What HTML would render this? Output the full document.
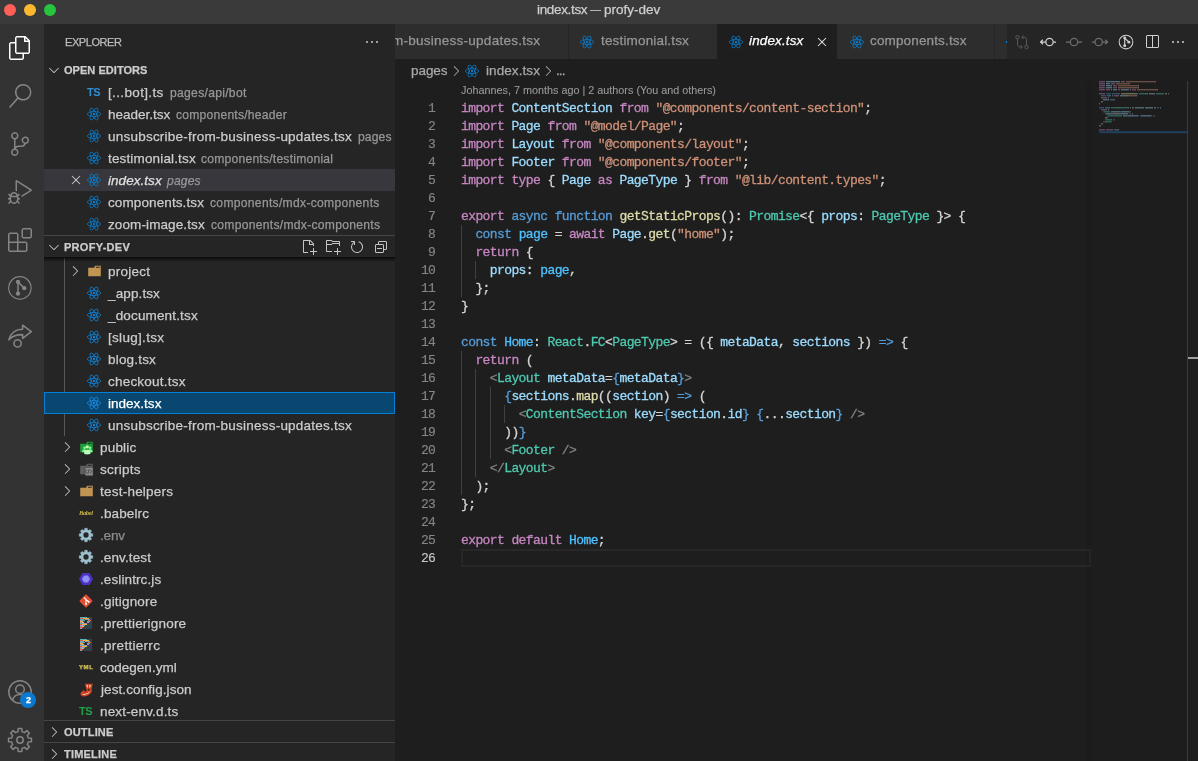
<!DOCTYPE html>
<html>
<head>
<meta charset="utf-8">
<title>index.tsx — profy-dev</title>
<style>
*{box-sizing:border-box;margin:0;padding:0}
html,body{width:1198px;height:761px;overflow:hidden;background:#1e1e1e}
body{font-family:"Liberation Sans",sans-serif;font-size:13px;color:#cccccc;position:relative}
.p{position:absolute}
.tx{position:absolute;white-space:pre;height:22px;will-change:transform;-webkit-text-stroke:0.25px}
.ic{position:absolute;overflow:visible}
#code{position:absolute;left:0;top:0;font-family:"Liberation Mono",monospace;font-size:13px;letter-spacing:-0.6px;color:#d4d4d4}
.ln{-webkit-text-stroke:0.15px;will-change:transform;position:absolute;left:395px;width:40.3px;text-align:right;color:#858585;height:18px;line-height:18px;white-space:pre}
.cl{-webkit-text-stroke:0.3px;will-change:transform;position:absolute;left:461px;height:18px;line-height:18px;white-space:pre}
.k{color:#c586c0}.b{color:#569cd6}.v{color:#9cdcfe}.s{color:#ce9178}.f{color:#dcdcaa}.t{color:#4ec9b0}.c{color:#4fc1ff}.g{color:#808080}
.gd{position:absolute;width:1px;background:#404040}
</style>
</head>
<body>
<div class="p" style="left:0px;top:0px;width:1198px;height:24px;background:#3a3a3a;"></div><div class="p" style="left:0px;top:24px;width:44px;height:737px;background:#333333;"></div><div class="p" style="left:44px;top:24px;width:351px;height:737px;background:#252526;"></div><div class="p" style="left:395px;top:24px;width:803px;height:35px;background:#252526;"></div><div class="p" style="left:395px;top:59px;width:803px;height:702px;background:#1e1e1e;"></div><div class="p" style="left:4px;top:4px;width:12px;height:12px;border-radius:50%;background:#fe5f57"></div><div class="p" style="left:24px;top:4px;width:12px;height:12px;border-radius:50%;background:#fdb82d"></div><div class="p" style="left:44px;top:4px;width:12px;height:12px;border-radius:50%;background:#27c43e"></div><div class="p" style="left:590.2px;top:9.5px;width:10.8px;height:1.2px;background:#b4b4b4;"></div><svg class="ic" style="left:8px;top:36px" width="24" height="24" viewBox="0 0 24 24" fill="#ffffff" ><path d="M17.5 0h-9L7 1.5V6H2.5L1 7.5v15.07L2.5 24h12.07L16 22.57V18h4.7l1.3-1.43V4.5L17.5 0zm0 2.12l2.38 2.38H17.5V2.12zm-3 20.38h-12v-15H7v9.07L8.5 18h6v4.5zm6-6h-12v-15H16V6h4.5v10.5z"/></svg><svg class="ic" style="left:8px;top:84px" width="24" height="24" viewBox="0 0 24 24" fill="#858585" ><path d="M15.25 0a8.25 8.25 0 0 0-6.18 13.72L1 22.88l1.12 1.12 8.05-9.12A8.251 8.251 0 1 0 15.25.01V0zm0 15a6.75 6.75 0 1 1 0-13.5 6.75 6.75 0 0 1 0 13.5z"/></svg><svg class="ic" style="left:8px;top:132px" width="24" height="24" viewBox="0 0 24 24" fill="#858585" ><path d="M21.007 8.222A3.738 3.738 0 0 0 15.045 5.2a3.737 3.737 0 0 0 1.156 6.583 2.988 2.988 0 0 1-2.668 1.67h-2.99a4.456 4.456 0 0 0-2.989 1.165V7.4a3.737 3.737 0 1 0-1.494 0v9.117a3.776 3.776 0 1 0 1.816.099 2.99 2.99 0 0 1 2.668-1.667h2.99a4.484 4.484 0 0 0 4.223-3.039 3.736 3.736 0 0 0 3.25-3.687zM4.565 3.738a2.242 2.242 0 1 1 4.484 0 2.242 2.242 0 0 1-4.484 0zm4.484 16.441a2.242 2.242 0 1 1-4.484 0 2.242 2.242 0 0 1 4.484 0zm8.221-9.715a2.242 2.242 0 1 1 0-4.485 2.242 2.242 0 0 1 0 4.485z"/></svg><svg class="ic" style="left:8px;top:180px" width="24" height="24" viewBox="0 0 24 24" fill="#858585" ><path d="M10.94 13.5l-1.32 1.32a3.73 3.73 0 0 0-7.24 0L1.06 13.5 0 14.56l1.72 1.72-.22.22V18H0v1.5h1.5v.08c.077.489.214.966.41 1.42L0 22.94 1.06 24l1.65-1.65A4.308 4.308 0 0 0 6 24a4.31 4.31 0 0 0 3.29-1.65L10.94 24 12 22.94 10.09 21c.198-.464.336-.951.41-1.45v-.1H12V18h-1.5v-1.5l-.22-.22L12 14.56l-1.06-1.06zM6 13.5a2.25 2.25 0 0 1 2.25 2.25h-4.5A2.25 2.25 0 0 1 6 13.5zm3 6a3.33 3.33 0 0 1-3 3 3.33 3.33 0 0 1-3-3v-2.25h6v2.25zm14.76-9.9v1.26L13.5 17.37V15.6l8.5-5.37L9 2v9.46a5.07 5.07 0 0 0-1.5-.72V.63L8.64 0l15.12 9.6z"/></svg><svg class="ic" style="left:8px;top:228px" width="24" height="24" viewBox="0 0 24 24" fill="#858585" ><path d="M13.5 1.5L15 0h7.5L24 1.5V9l-1.5 1.5H15L13.5 9V1.5zm1.5 0V9h7.5V1.5H15zM0 15V6l1.5-1.5H9L10.5 6v7.5H18l1.5 1.5v7.5L18 24H1.5L0 22.5V15zm9-1.5V6H1.5v7.5H9zM9 15H1.5v7.5H9V15zm1.5 7.5H18V15h-7.5v7.5z"/></svg><svg class="ic" style="left:8px;top:276px" width="24" height="24" viewBox="0 0 24 24" fill="none" stroke="#858585" stroke-width="1.150"><circle cx="11.900" cy="11.900" r="11.200"/><path d="M10 5.900V17.700M10 5.900L16.300 12.200" stroke-width="1.500"/><circle cx="10" cy="5.900" r="2.150" fill="#858585" stroke="none"/><circle cx="10" cy="17.700" r="2.150" fill="#858585" stroke="none"/><circle cx="16.300" cy="12.200" r="2.150" fill="#858585" stroke="none"/></svg><svg class="ic" style="left:8px;top:324px" width="24" height="24" viewBox="0 0 24 24" fill="none" stroke="#858585" stroke-width="1.600" stroke-linejoin="round"><path d="M0.900 15.800C2.500 9.500 7.500 5.200 14.600 5.200V1.200L23.300 7.700L14.600 14.400V10.600C9.500 10.600 4.500 11.200 0.900 15.800Z"/><circle cx="9.600" cy="19.400" r="3.600"/></svg><svg class="ic" style="left:8px;top:680px" width="24" height="24" viewBox="0 0 24 24" fill="none" stroke="#858585" stroke-width="1.5"><circle cx="12" cy="12" r="11.2"/><circle cx="12" cy="9.2" r="4.3"/><path d="M4.6 20.2C5.6 16.4 8.4 14.6 12 14.6S18.4 16.4 19.4 20.2"/></svg><div class="p" style="left:20px;top:692px;width:16px;height:16px;border-radius:50%;background:#0a7ad1"></div><svg class="ic" style="left:8px;top:728px" width="24" height="24" viewBox="0 0 24 24" fill="none" stroke="#858585" stroke-width="1.5" stroke-linejoin="round"><path d="M9.99 3.64 L10.19 0.54 L13.81 0.54 L14.01 3.64 L16.49 4.67 L18.82 2.62 L21.38 5.18 L19.33 7.51 L20.36 9.99 L23.46 10.19 L23.46 13.81 L20.36 14.01 L19.33 16.49 L21.38 18.82 L18.82 21.38 L16.49 19.33 L14.01 20.36 L13.81 23.46 L10.19 23.46 L9.99 20.36 L7.51 19.33 L5.18 21.38 L2.62 18.82 L4.67 16.49 L3.64 14.01 L0.54 13.81 L0.54 10.19 L3.64 9.99 L4.67 7.51 L2.62 5.18 L5.18 2.62 L7.51 4.67Z"/><circle cx="12" cy="12" r="3.2"/></svg><svg class="ic" style="left:364px;top:34px" width="16" height="16" viewBox="0 0 16 16" fill="#c5c5c5" ><path d="M4 8a1 1 0 1 1-2 0 1 1 0 0 1 2 0zm5 0a1 1 0 1 1-2 0 1 1 0 0 1 2 0zm5 0a1 1 0 1 1-2 0 1 1 0 0 1 2 0z"/></svg><svg class="ic" style="left:46px;top:62px" width="16" height="16" viewBox="0 0 16 16" fill="#c5c5c5" ><path d="M7.976 10.072l4.357-4.357.62.618L8.284 11h-.618L3 6.333l.619-.618 4.357 4.357z"/></svg><svg class="ic" style="left:86.1px;top:106px" width="16" height="16" viewBox="0 0 16 16" fill="none" stroke="#0a7ccc" stroke-width="0.75"><ellipse cx="8" cy="8" rx="6.65" ry="2.5" transform="rotate(0 8 8)"/><ellipse cx="8" cy="8" rx="6.65" ry="2.5" transform="rotate(60 8 8)"/><ellipse cx="8" cy="8" rx="6.65" ry="2.5" transform="rotate(120 8 8)"/><circle cx="8" cy="8" r="1.2" fill="#0a7ccc" stroke="none"/></svg><svg class="ic" style="left:86.1px;top:128px" width="16" height="16" viewBox="0 0 16 16" fill="none" stroke="#0a7ccc" stroke-width="0.75"><ellipse cx="8" cy="8" rx="6.65" ry="2.5" transform="rotate(0 8 8)"/><ellipse cx="8" cy="8" rx="6.65" ry="2.5" transform="rotate(60 8 8)"/><ellipse cx="8" cy="8" rx="6.65" ry="2.5" transform="rotate(120 8 8)"/><circle cx="8" cy="8" r="1.2" fill="#0a7ccc" stroke="none"/></svg><svg class="ic" style="left:86.1px;top:150px" width="16" height="16" viewBox="0 0 16 16" fill="none" stroke="#0a7ccc" stroke-width="0.75"><ellipse cx="8" cy="8" rx="6.65" ry="2.5" transform="rotate(0 8 8)"/><ellipse cx="8" cy="8" rx="6.65" ry="2.5" transform="rotate(60 8 8)"/><ellipse cx="8" cy="8" rx="6.65" ry="2.5" transform="rotate(120 8 8)"/><circle cx="8" cy="8" r="1.2" fill="#0a7ccc" stroke="none"/></svg><div class="p" style="left:44px;top:169px;width:351px;height:22px;background:#37373d;"></div><svg class="ic" style="left:68px;top:172px" width="16" height="16" viewBox="0 0 16 16" fill="#c5c5c5" ><path d="M8 8.707l3.646 3.647.708-.707L8.707 8l3.647-3.646-.707-.708L8 7.293 4.354 3.646l-.707.708L7.293 8l-3.646 3.646.707.708L8 8.707z"/></svg><svg class="ic" style="left:86.1px;top:172px" width="16" height="16" viewBox="0 0 16 16" fill="none" stroke="#0a7ccc" stroke-width="0.75"><ellipse cx="8" cy="8" rx="6.65" ry="2.5" transform="rotate(0 8 8)"/><ellipse cx="8" cy="8" rx="6.65" ry="2.5" transform="rotate(60 8 8)"/><ellipse cx="8" cy="8" rx="6.65" ry="2.5" transform="rotate(120 8 8)"/><circle cx="8" cy="8" r="1.2" fill="#0a7ccc" stroke="none"/></svg><svg class="ic" style="left:86.1px;top:194px" width="16" height="16" viewBox="0 0 16 16" fill="none" stroke="#0a7ccc" stroke-width="0.75"><ellipse cx="8" cy="8" rx="6.65" ry="2.5" transform="rotate(0 8 8)"/><ellipse cx="8" cy="8" rx="6.65" ry="2.5" transform="rotate(60 8 8)"/><ellipse cx="8" cy="8" rx="6.65" ry="2.5" transform="rotate(120 8 8)"/><circle cx="8" cy="8" r="1.2" fill="#0a7ccc" stroke="none"/></svg><svg class="ic" style="left:86.1px;top:216px" width="16" height="16" viewBox="0 0 16 16" fill="none" stroke="#0a7ccc" stroke-width="0.75"><ellipse cx="8" cy="8" rx="6.65" ry="2.5" transform="rotate(0 8 8)"/><ellipse cx="8" cy="8" rx="6.65" ry="2.5" transform="rotate(60 8 8)"/><ellipse cx="8" cy="8" rx="6.65" ry="2.5" transform="rotate(120 8 8)"/><circle cx="8" cy="8" r="1.2" fill="#0a7ccc" stroke="none"/></svg><div class="p" style="left:44px;top:235px;width:351px;height:1px;background:#454545;"></div><svg class="ic" style="left:46px;top:239px" width="16" height="16" viewBox="0 0 16 16" fill="#c5c5c5" ><path d="M7.976 10.072l4.357-4.357.62.618L8.284 11h-.618L3 6.333l.619-.618 4.357 4.357z"/></svg><svg class="ic" style="left:301px;top:239px" width="16" height="16" viewBox="0 0 16 16" fill="#c5c5c5" ><path d="M9.5 1.1l3.4 3.5.1.4v2h-1V6H8V2H3v11h4v1H2.5l-.5-.5v-12l.5-.5h6.7l.3.1zM9 2v3h2.9L9 2zm4 14h-1v-3H9v-1h3V9h1v3h3v1h-3v3z"/></svg><svg class="ic" style="left:325px;top:239px" width="16" height="16" viewBox="0 0 16 16" fill="#c5c5c5" ><path d="M14.5 2H7.71l-.85-.85L6.51 1h-5l-.5.5v11l.5.5H7v-1H1.99V6h4.49l.35-.15.86-.86H14v1.5l-.001.51h1.011V2.5L14.5 2zm-.51 2h-6.5l-.35.15-.86.86H2v-3h4.29l.85.85.36.15H14l-.01.99zM13 16h-1v-3H9v-1h3V9h1v3h3v1h-3v3z"/></svg><svg class="ic" style="left:349px;top:239px" width="16" height="16" viewBox="0 0 16 16" fill="#c5c5c5" ><path d="M4.681 3H2V2h3.5l.5.5V6H5V4a5 5 0 1 0 4.53-.761l.302-.954A6 6 0 1 1 4.681 3z"/></svg><svg class="ic" style="left:373px;top:239px" width="16" height="16" viewBox="0 0 16 16" fill="#c5c5c5" ><path d="M9 9H4v1h5V9z M5 3l1-1h7l1 1v7l-1 1h-2v2l-1 1H3l-1-1V6l1-1h2V3zm1 2h4l1 1v4h2V3H6v2zm4 1H3v7h7V6z"/></svg><div class="p" style="left:64px;top:258px;width:1px;height:178px;background:#585858;"></div><div class="p" style="left:44px;top:257px;width:351px;height:5px;background:linear-gradient(#000000b0,#00000000)"></div><svg class="ic" style="left:66.9px;top:263px" width="16" height="16" viewBox="0 0 16 16" fill="#c5c5c5" ><path d="M10.072 8.024L5.715 3.667l.618-.62L11 7.716v.618L6.333 13l-.618-.619 4.357-4.357z"/></svg><svg class="ic" style="left:85.89999999999999px;top:263px" width="16" height="16" viewBox="0 0 32 32"><path d="M27.5 5.5H18.2L16.1 9.7H4.4V26.5H29.6V5.5Zm0 4.2H19.3l1.1-2.1h7.1Z" fill="#c09553"/></svg><svg class="ic" style="left:86.1px;top:285px" width="16" height="16" viewBox="0 0 16 16" fill="none" stroke="#1283d6" stroke-width="0.75"><ellipse cx="8" cy="8" rx="6.65" ry="2.5" transform="rotate(0 8 8)"/><ellipse cx="8" cy="8" rx="6.65" ry="2.5" transform="rotate(60 8 8)"/><ellipse cx="8" cy="8" rx="6.65" ry="2.5" transform="rotate(120 8 8)"/><circle cx="8" cy="8" r="1.2" fill="#1283d6" stroke="none"/></svg><svg class="ic" style="left:86.1px;top:307px" width="16" height="16" viewBox="0 0 16 16" fill="none" stroke="#1283d6" stroke-width="0.75"><ellipse cx="8" cy="8" rx="6.65" ry="2.5" transform="rotate(0 8 8)"/><ellipse cx="8" cy="8" rx="6.65" ry="2.5" transform="rotate(60 8 8)"/><ellipse cx="8" cy="8" rx="6.65" ry="2.5" transform="rotate(120 8 8)"/><circle cx="8" cy="8" r="1.2" fill="#1283d6" stroke="none"/></svg><svg class="ic" style="left:86.1px;top:329px" width="16" height="16" viewBox="0 0 16 16" fill="none" stroke="#1283d6" stroke-width="0.75"><ellipse cx="8" cy="8" rx="6.65" ry="2.5" transform="rotate(0 8 8)"/><ellipse cx="8" cy="8" rx="6.65" ry="2.5" transform="rotate(60 8 8)"/><ellipse cx="8" cy="8" rx="6.65" ry="2.5" transform="rotate(120 8 8)"/><circle cx="8" cy="8" r="1.2" fill="#1283d6" stroke="none"/></svg><svg class="ic" style="left:86.1px;top:351px" width="16" height="16" viewBox="0 0 16 16" fill="none" stroke="#1283d6" stroke-width="0.75"><ellipse cx="8" cy="8" rx="6.65" ry="2.5" transform="rotate(0 8 8)"/><ellipse cx="8" cy="8" rx="6.65" ry="2.5" transform="rotate(60 8 8)"/><ellipse cx="8" cy="8" rx="6.65" ry="2.5" transform="rotate(120 8 8)"/><circle cx="8" cy="8" r="1.2" fill="#1283d6" stroke="none"/></svg><svg class="ic" style="left:86.1px;top:373px" width="16" height="16" viewBox="0 0 16 16" fill="none" stroke="#1283d6" stroke-width="0.75"><ellipse cx="8" cy="8" rx="6.65" ry="2.5" transform="rotate(0 8 8)"/><ellipse cx="8" cy="8" rx="6.65" ry="2.5" transform="rotate(60 8 8)"/><ellipse cx="8" cy="8" rx="6.65" ry="2.5" transform="rotate(120 8 8)"/><circle cx="8" cy="8" r="1.2" fill="#1283d6" stroke="none"/></svg><div class="p" style="left:44px;top:392px;width:351px;height:22px;background:#094771;border:1px solid #007fd4"></div><svg class="ic" style="left:86.1px;top:395px" width="16" height="16" viewBox="0 0 16 16" fill="none" stroke="#1a8be0" stroke-width="0.75"><ellipse cx="8" cy="8" rx="6.65" ry="2.5" transform="rotate(0 8 8)"/><ellipse cx="8" cy="8" rx="6.65" ry="2.5" transform="rotate(60 8 8)"/><ellipse cx="8" cy="8" rx="6.65" ry="2.5" transform="rotate(120 8 8)"/><circle cx="8" cy="8" r="1.2" fill="#1a8be0" stroke="none"/></svg><svg class="ic" style="left:86.1px;top:417px" width="16" height="16" viewBox="0 0 16 16" fill="none" stroke="#1283d6" stroke-width="0.75"><ellipse cx="8" cy="8" rx="6.65" ry="2.5" transform="rotate(0 8 8)"/><ellipse cx="8" cy="8" rx="6.65" ry="2.5" transform="rotate(60 8 8)"/><ellipse cx="8" cy="8" rx="6.65" ry="2.5" transform="rotate(120 8 8)"/><circle cx="8" cy="8" r="1.2" fill="#1283d6" stroke="none"/></svg><svg class="ic" style="left:58.900000000000006px;top:439px" width="16" height="16" viewBox="0 0 16 16" fill="#c5c5c5" ><path d="M10.072 8.024L5.715 3.667l.618-.62L11 7.716v.618L6.333 13l-.618-.619 4.357-4.357z"/></svg><svg class="ic" style="left:78.2px;top:439px" width="16" height="16" viewBox="0 0 32 32"><path d="M27.5 5.5H18.2L16.1 9.7H4.4V26.5H29.6V5.5Zm0 4.2H19.3l1.1-2.1h7.1Z" fill="#1f9b3a"/><g transform="translate(1.6 1.2)"><g fill="#8ef58f"><circle cx="11.500" cy="16.500" r="2.600"/><circle cx="22.500" cy="16.500" r="2.600"/><path d="M6.500 25.500c0-4 2.200-6 5-6s5 2 5 6zM17.500 25.500c0-4 2.200-6 5-6s5 2 5 6z"/></g><g fill="#b9ffba"><circle cx="17" cy="14.500" r="3.200"/><path d="M10.500 28.500c0-5.500 3-8 6.500-8s6.500 2.500 6.500 8c-2 1.600-11 1.600-13 0z"/></g></g></svg><svg class="ic" style="left:58.900000000000006px;top:461px" width="16" height="16" viewBox="0 0 16 16" fill="#c5c5c5" ><path d="M10.072 8.024L5.715 3.667l.618-.62L11 7.716v.618L6.333 13l-.618-.619 4.357-4.357z"/></svg><svg class="ic" style="left:78.2px;top:461px" width="16" height="16" viewBox="0 0 32 32"><path d="M27.5 5.5H18.2L16.1 9.7H4.4V26.5H29.6V5.5Zm0 4.2H19.3l1.1-2.1h7.1Z" fill="#5f5f5f"/><path d="M14 12.500h13.500c1.500 0 2.500 1 2.500 2.500v14.500H17c-1.600 0-3-1.200-3-3z" fill="#8a8a8a" stroke="#3c3c3c" stroke-width="1.200"/><path d="M18 17.500l-3 3.500 3 3.500M24 17.500l3 3.500-3 3.500M22.500 16l-3 10" stroke="#3c3c3c" stroke-width="1.600" fill="none"/></svg><svg class="ic" style="left:58.900000000000006px;top:483px" width="16" height="16" viewBox="0 0 16 16" fill="#c5c5c5" ><path d="M10.072 8.024L5.715 3.667l.618-.62L11 7.716v.618L6.333 13l-.618-.619 4.357-4.357z"/></svg><svg class="ic" style="left:78.2px;top:483px" width="16" height="16" viewBox="0 0 32 32"><path d="M27.5 5.5H18.2L16.1 9.7H4.4V26.5H29.6V5.5Zm0 4.2H19.3l1.1-2.1h7.1Z" fill="#c09553"/></svg><svg class="ic" style="left:78.4px;top:527px" width="16" height="16" viewBox="0 0 16 16"><path d="M6.75 2.95 L6.78 1.31 L9.22 1.31 L9.25 2.95 L10.68 3.55 L11.87 2.41 L13.59 4.13 L12.45 5.32 L13.05 6.75 L14.69 6.78 L14.69 9.22 L13.05 9.25 L12.45 10.68 L13.59 11.87 L11.87 13.59 L10.68 12.45 L9.25 13.05 L9.22 14.69 L6.78 14.69 L6.75 13.05 L5.32 12.45 L4.13 13.59 L2.41 11.87 L3.55 10.68 L2.95 9.25 L1.31 9.22 L1.31 6.78 L2.95 6.75 L3.55 5.32 L2.41 4.13 L4.13 2.41 L5.32 3.55Z" fill="#9dc0cf" stroke="#9dc0cf" stroke-width="0.600" stroke-linejoin="round"/><circle cx="8" cy="8" r="2.650" fill="#252526"/></svg><svg class="ic" style="left:78.4px;top:549px" width="16" height="16" viewBox="0 0 16 16"><path d="M6.75 2.95 L6.78 1.31 L9.22 1.31 L9.25 2.95 L10.68 3.55 L11.87 2.41 L13.59 4.13 L12.45 5.32 L13.05 6.75 L14.69 6.78 L14.69 9.22 L13.05 9.25 L12.45 10.68 L13.59 11.87 L11.87 13.59 L10.68 12.45 L9.25 13.05 L9.22 14.69 L6.78 14.69 L6.75 13.05 L5.32 12.45 L4.13 13.59 L2.41 11.87 L3.55 10.68 L2.95 9.25 L1.31 9.22 L1.31 6.78 L2.95 6.75 L3.55 5.32 L2.41 4.13 L4.13 2.41 L5.32 3.55Z" fill="#9dc0cf" stroke="#9dc0cf" stroke-width="0.600" stroke-linejoin="round"/><circle cx="8" cy="8" r="2.650" fill="#252526"/></svg><svg class="ic" style="left:78.4px;top:571px" width="16" height="16" viewBox="0 0 16 16"><path d="M1 8L4.500 1.900h7L15 8l-3.500 6.100h-7z" fill="#4b32c3"/><path d="M4.400 8L6.200 4.900h3.600L11.600 8 9.800 11.100H6.200z" fill="#8f8ff5" stroke="#8f8ff5" stroke-width="0.800" stroke-linejoin="round"/></svg><svg class="ic" style="left:78.10000000000001px;top:593.1px" width="16" height="16" viewBox="0 0 16 16"><rect x="3.200" y="3.200" width="9.600" height="9.600" rx="0.900" transform="rotate(45 8 8)" fill="#e34c30"/><path d="M5.800 4.300L8 6.500M8 5.800v5M8 6.600l2.400 1.900" stroke="#fff" stroke-width="1.100" fill="none"/><circle cx="8" cy="11" r="1" fill="#fff"/><circle cx="10.700" cy="8.700" r="1" fill="#fff"/></svg><svg class="ic" style="left:79.800px;top:617px" width="12" height="12" viewBox="0 0 12 12" shape-rendering="crispEdges"><rect width="12" height="12" fill="#33414a"/><rect x="0" y="0" width="7" height="0.850" fill="#56b3b4"/><rect x="0" y="1" width="3" height="0.850" fill="#e0584f"/><rect x="3" y="1" width="6" height="0.850" fill="#f0b53e"/><rect x="0" y="2" width="4" height="0.850" fill="#56b3b4"/><rect x="5" y="2" width="3" height="0.850" fill="#b884b8"/><rect x="8" y="2" width="2" height="0.850" fill="#56b3b4"/><rect x="0" y="3" width="2" height="0.850" fill="#b884b8"/><rect x="2" y="3" width="3" height="0.850" fill="#56b3b4"/><rect x="8" y="3" width="3" height="0.850" fill="#e0584f"/><rect x="0" y="4" width="3" height="0.850" fill="#f0b53e"/><rect x="7" y="4" width="3" height="0.850" fill="#56b3b4"/><rect x="0" y="5" width="2" height="0.850" fill="#b884b8"/><rect x="2" y="5" width="2" height="0.850" fill="#f0b53e"/><rect x="6" y="5" width="3" height="0.850" fill="#b884b8"/><rect x="0" y="6" width="3" height="0.850" fill="#56b3b4"/><rect x="3" y="6" width="4" height="0.850" fill="#b884b8"/><rect x="0" y="7" width="2" height="0.850" fill="#e0584f"/><rect x="2" y="7" width="5" height="0.850" fill="#f0b53e"/><rect x="0" y="8" width="3" height="0.850" fill="#b884b8"/><rect x="3" y="8" width="2" height="0.850" fill="#56b3b4"/><rect x="0" y="9" width="2" height="0.850" fill="#56b3b4"/><rect x="2" y="9" width="2" height="0.850" fill="#f0b53e"/><rect x="0" y="10" width="3" height="0.850" fill="#e0584f"/><rect x="0" y="11" width="2" height="0.850" fill="#b884b8"/><rect x="4.500" y="3.200" width="2.500" height="2.600" fill="#222d33"/></svg><svg class="ic" style="left:79.800px;top:639px" width="12" height="12" viewBox="0 0 12 12" shape-rendering="crispEdges"><rect width="12" height="12" fill="#33414a"/><rect x="0" y="0" width="7" height="0.850" fill="#56b3b4"/><rect x="0" y="1" width="3" height="0.850" fill="#e0584f"/><rect x="3" y="1" width="6" height="0.850" fill="#f0b53e"/><rect x="0" y="2" width="4" height="0.850" fill="#56b3b4"/><rect x="5" y="2" width="3" height="0.850" fill="#b884b8"/><rect x="8" y="2" width="2" height="0.850" fill="#56b3b4"/><rect x="0" y="3" width="2" height="0.850" fill="#b884b8"/><rect x="2" y="3" width="3" height="0.850" fill="#56b3b4"/><rect x="8" y="3" width="3" height="0.850" fill="#e0584f"/><rect x="0" y="4" width="3" height="0.850" fill="#f0b53e"/><rect x="7" y="4" width="3" height="0.850" fill="#56b3b4"/><rect x="0" y="5" width="2" height="0.850" fill="#b884b8"/><rect x="2" y="5" width="2" height="0.850" fill="#f0b53e"/><rect x="6" y="5" width="3" height="0.850" fill="#b884b8"/><rect x="0" y="6" width="3" height="0.850" fill="#56b3b4"/><rect x="3" y="6" width="4" height="0.850" fill="#b884b8"/><rect x="0" y="7" width="2" height="0.850" fill="#e0584f"/><rect x="2" y="7" width="5" height="0.850" fill="#f0b53e"/><rect x="0" y="8" width="3" height="0.850" fill="#b884b8"/><rect x="3" y="8" width="2" height="0.850" fill="#56b3b4"/><rect x="0" y="9" width="2" height="0.850" fill="#56b3b4"/><rect x="2" y="9" width="2" height="0.850" fill="#f0b53e"/><rect x="0" y="10" width="3" height="0.850" fill="#e0584f"/><rect x="0" y="11" width="2" height="0.850" fill="#b884b8"/><rect x="4.500" y="3.200" width="2.500" height="2.600" fill="#222d33"/></svg><svg class="ic" style="left:79.0px;top:681.6px" width="16" height="16" viewBox="0 0 16 16"><path d="M5.900 1.800h7.900l-1.200 5.400c.5 1 .5 2.200-.2 3.400-1.300 2.300-4.300 3.800-7.300 3.800-2.300 0-3.600-.9-3.600-2.300 0-1.100.7-2 1.800-2.300-.2-.5 0-1.200.7-1.400.7-.2 1.300.2 1.500.8.500.2 1 .4 1.500.3.500-.1.700-.6.600-1.200z" fill="#cf4420"/><path d="M7.600 3h1.300l-.2 2.600h-.8zM10.300 3h1.400l-.5 2.600h-.8z" fill="#f8e4dc"/><circle cx="9.700" cy="7.600" r="0.900" fill="#3a1a12"/><path d="M3.600 12.400c1.500.4 4.800-.2 7-2.400" stroke="#f8e4dc" stroke-width="0.800" fill="none"/></svg><div class="p" style="left:44px;top:720px;width:351px;height:41px;background:#252526;"></div><div class="p" style="left:44px;top:720px;width:351px;height:1px;background:#454545;"></div><div class="p" style="left:44px;top:742px;width:351px;height:1px;background:#454545;"></div><svg class="ic" style="left:46px;top:724px" width="16" height="16" viewBox="0 0 16 16" fill="#c5c5c5" ><path d="M10.072 8.024L5.715 3.667l.618-.62L11 7.716v.618L6.333 13l-.618-.619 4.357-4.357z"/></svg><svg class="ic" style="left:46px;top:746px" width="16" height="16" viewBox="0 0 16 16" fill="#c5c5c5" ><path d="M10.072 8.024L5.715 3.667l.618-.62L11 7.716v.618L6.333 13l-.618-.619 4.357-4.357z"/></svg><div class="p" style="left:395px;top:24px;width:173px;height:35px;background:#2d2d2d;"></div><div class="p" style="left:569px;top:24px;width:148px;height:35px;background:#2d2d2d;"></div><div class="p" style="left:717px;top:24px;width:120px;height:35px;background:#1e1e1e;"></div><div class="p" style="left:837px;top:24px;width:157px;height:35px;background:#2d2d2d;"></div><div class="p" style="left:995px;top:24px;width:12px;height:35px;background:#2d2d2d;"></div><div class="p" style="left:1006px;top:41px;width:1px;height:2px;background:#0a7fd2;"></div><svg class="ic" style="left:579.1px;top:33.5px" width="16" height="16" viewBox="0 0 16 16" fill="none" stroke="#0a7ccc" stroke-width="0.75"><ellipse cx="8" cy="8" rx="6.65" ry="2.5" transform="rotate(0 8 8)"/><ellipse cx="8" cy="8" rx="6.65" ry="2.5" transform="rotate(60 8 8)"/><ellipse cx="8" cy="8" rx="6.65" ry="2.5" transform="rotate(120 8 8)"/><circle cx="8" cy="8" r="1.2" fill="#0a7ccc" stroke="none"/></svg><svg class="ic" style="left:727.5px;top:33.5px" width="16" height="16" viewBox="0 0 16 16" fill="none" stroke="#0a7ccc" stroke-width="0.75"><ellipse cx="8" cy="8" rx="6.65" ry="2.5" transform="rotate(0 8 8)"/><ellipse cx="8" cy="8" rx="6.65" ry="2.5" transform="rotate(60 8 8)"/><ellipse cx="8" cy="8" rx="6.65" ry="2.5" transform="rotate(120 8 8)"/><circle cx="8" cy="8" r="1.2" fill="#0a7ccc" stroke="none"/></svg><svg class="ic" style="left:814.2px;top:33.7px" width="16" height="16" viewBox="0 0 16 16" fill="#e0e0e0" ><path d="M8 8.707l3.646 3.647.708-.707L8.707 8l3.647-3.646-.707-.708L8 7.293 4.354 3.646l-.707.708L7.293 8l-3.646 3.646.707.708L8 8.707z"/></svg><svg class="ic" style="left:849px;top:33.5px" width="16" height="16" viewBox="0 0 16 16" fill="none" stroke="#0a7ccc" stroke-width="0.75"><ellipse cx="8" cy="8" rx="6.65" ry="2.5" transform="rotate(0 8 8)"/><ellipse cx="8" cy="8" rx="6.65" ry="2.5" transform="rotate(60 8 8)"/><ellipse cx="8" cy="8" rx="6.65" ry="2.5" transform="rotate(120 8 8)"/><circle cx="8" cy="8" r="1.2" fill="#0a7ccc" stroke="none"/></svg><svg class="ic" style="left:1014px;top:33.8px" width="16" height="16" viewBox="0 0 16 16" fill="none" stroke="#5a5a5a" stroke-width="1"><circle cx="3.500" cy="3.200" r="1.700"/><circle cx="12.500" cy="13" r="1.700"/><path d="M3.500 5v5.500c0 1.600 1 2.500 2.500 2.500h2M6.500 11.200l1.800 1.800-1.800 1.800M12.500 11.300V5.700C12.500 4.100 11.500 3.200 10 3.200H8M9.500 5L7.700 3.200 9.500 1.400"/></svg><svg class="ic" style="left:1040px;top:33.8px" width="16" height="16" viewBox="0 0 16 16" fill="none" stroke="#d0d0d0" stroke-width="1.250"><circle cx="9.500" cy="8" r="3.700"/><path d="M0.600 8H5.800M13.200 8h2.800M2.900 5.700L0.600 8 2.900 10.300"/></svg><svg class="ic" style="left:1066px;top:33.8px" width="16" height="16" viewBox="0 0 16 16" fill="none" stroke="#6e6e6e" stroke-width="1.250"><circle cx="8" cy="8" r="3.700"/><path d="M0 8H4.300M11.700 8H16"/></svg><svg class="ic" style="left:1092px;top:33.8px" width="16" height="16" viewBox="0 0 16 16" fill="none" stroke="#6e6e6e" stroke-width="1.250"><circle cx="6.700" cy="8" r="3.700"/><path d="M0 8H3M10.400 8h5.200M13.300 5.700L15.600 8 13.300 10.300"/></svg><svg class="ic" style="left:1118.1px;top:33.8px" width="16" height="16" viewBox="0 0 16 16" fill="none" stroke="#d0d0d0" stroke-width="1.050"><circle cx="8" cy="8" r="6.850"/><path d="M6.700 4V11.800M6.700 4L10.850 8.150" stroke-width="1.150"/><circle cx="6.700" cy="4" r="1.450" fill="#d0d0d0" stroke="none"/><circle cx="6.700" cy="11.800" r="1.450" fill="#d0d0d0" stroke="none"/><circle cx="10.850" cy="8.150" r="1.450" fill="#d0d0d0" stroke="none"/></svg><svg class="ic" style="left:1143.7px;top:33.8px" width="16" height="16" viewBox="0 0 16 16" fill="#d0d0d0" ><path d="M14 1H3L2 2v11l1 1h11l1-1V2l-1-1zM8 13H3V2h5v11zm6 0H9V2h5v11z"/></svg><svg class="ic" style="left:1170px;top:33.8px" width="16" height="16" viewBox="0 0 16 16" fill="#d0d0d0" ><path d="M4 8a1 1 0 1 1-2 0 1 1 0 0 1 2 0zm5 0a1 1 0 1 1-2 0 1 1 0 0 1 2 0zm5 0a1 1 0 1 1-2 0 1 1 0 0 1 2 0z"/></svg><svg class="ic" style="left:448.2px;top:62.5px" width="16" height="16" viewBox="0 0 16 16" fill="#a9a9a9" ><path d="M10.072 8.024L5.715 3.667l.618-.62L11 7.716v.618L6.333 13l-.618-.619 4.357-4.357z"/></svg><svg class="ic" style="left:464px;top:62.5px" width="16" height="16" viewBox="0 0 16 16" fill="none" stroke="#0a7ccc" stroke-width="0.75"><ellipse cx="8" cy="8" rx="6.65" ry="2.5" transform="rotate(0 8 8)"/><ellipse cx="8" cy="8" rx="6.65" ry="2.5" transform="rotate(60 8 8)"/><ellipse cx="8" cy="8" rx="6.65" ry="2.5" transform="rotate(120 8 8)"/><circle cx="8" cy="8" r="1.2" fill="#0a7ccc" stroke="none"/></svg><svg class="ic" style="left:540.2px;top:62.5px" width="16" height="16" viewBox="0 0 16 16" fill="#a9a9a9" ><path d="M10.072 8.024L5.715 3.667l.618-.62L11 7.716v.618L6.333 13l-.618-.619 4.357-4.357z"/></svg><div id="code"><div class="ln" style="top:100px;color:#858585">1</div><div class="cl" style="top:100px"><span class="k">import</span> <span class="v">ContentSection</span> <span class="k">from</span> <span class="s">"@components/content-section"</span>;</div><div class="ln" style="top:118px;color:#858585">2</div><div class="cl" style="top:118px"><span class="k">import</span> <span class="v">Page</span> <span class="k">from</span> <span class="s">"@model/Page"</span>;</div><div class="ln" style="top:136px;color:#858585">3</div><div class="cl" style="top:136px"><span class="k">import</span> <span class="v">Layout</span> <span class="k">from</span> <span class="s">"@components/layout"</span>;</div><div class="ln" style="top:154px;color:#858585">4</div><div class="cl" style="top:154px"><span class="k">import</span> <span class="v">Footer</span> <span class="k">from</span> <span class="s">"@components/footer"</span>;</div><div class="ln" style="top:172px;color:#858585">5</div><div class="cl" style="top:172px"><span class="k">import</span> <span class="k">type</span> { <span class="v">Page</span> <span class="k">as</span> <span class="v">PageType</span> } <span class="k">from</span> <span class="s">"@lib/content.types"</span>;</div><div class="ln" style="top:190px;color:#858585">6</div><div class="ln" style="top:208px;color:#858585">7</div><div class="cl" style="top:208px"><span class="k">export</span> <span class="b">async</span> <span class="b">function</span> <span class="f">getStaticProps</span>(): <span class="t">Promise</span>&lt;{ <span class="v">props</span>: <span class="t">PageType</span> }&gt; {</div><div class="ln" style="top:226px;color:#858585">8</div><div class="cl" style="top:226px">  <span class="b">const</span> <span class="c">page</span> = <span class="k">await</span> <span class="v">Page</span>.<span class="f">get</span>(<span class="s">"home"</span>);</div><div class="ln" style="top:244px;color:#858585">9</div><div class="cl" style="top:244px">  <span class="k">return</span> {</div><div class="ln" style="top:262px;color:#858585">10</div><div class="cl" style="top:262px">    <span class="v">props</span>: <span class="c">page</span>,</div><div class="ln" style="top:280px;color:#858585">11</div><div class="cl" style="top:280px">  };</div><div class="ln" style="top:298px;color:#858585">12</div><div class="cl" style="top:298px">}</div><div class="ln" style="top:316px;color:#858585">13</div><div class="ln" style="top:334px;color:#858585">14</div><div class="cl" style="top:334px"><span class="b">const</span> <span class="c">Home</span>: <span class="t">React</span>.<span class="t">FC</span>&lt;<span class="t">PageType</span>&gt; = ({ <span class="v">metaData</span>, <span class="v">sections</span> }) <span class="b">=&gt;</span> {</div><div class="ln" style="top:352px;color:#858585">15</div><div class="cl" style="top:352px">  <span class="k">return</span> (</div><div class="ln" style="top:370px;color:#858585">16</div><div class="cl" style="top:370px">    <span class="g">&lt;</span><span class="t">Layout</span> <span class="v">metaData</span>=<span class="b">{</span><span class="v">metaData</span><span class="b">}</span><span class="g">&gt;</span></div><div class="ln" style="top:388px;color:#858585">17</div><div class="cl" style="top:388px">      <span class="b">{</span><span class="v">sections</span>.<span class="f">map</span>((<span class="v">section</span>) <span class="b">=&gt;</span> (</div><div class="ln" style="top:406px;color:#858585">18</div><div class="cl" style="top:406px">        <span class="g">&lt;</span><span class="t">ContentSection</span> <span class="v">key</span>=<span class="b">{</span><span class="v">section</span>.<span class="v">id</span><span class="b">}</span> <span class="b">{</span>...<span class="v">section</span><span class="b">}</span> <span class="g">/&gt;</span></div><div class="ln" style="top:424px;color:#858585">19</div><div class="cl" style="top:424px">      ))<span class="b">}</span></div><div class="ln" style="top:442px;color:#858585">20</div><div class="cl" style="top:442px">      <span class="g">&lt;</span><span class="t">Footer</span> <span class="g">/&gt;</span></div><div class="ln" style="top:460px;color:#858585">21</div><div class="cl" style="top:460px">    <span class="g">&lt;/</span><span class="t">Layout</span><span class="g">&gt;</span></div><div class="ln" style="top:478px;color:#858585">22</div><div class="cl" style="top:478px">  );</div><div class="ln" style="top:496px;color:#858585">23</div><div class="cl" style="top:496px">};</div><div class="ln" style="top:514px;color:#858585">24</div><div class="ln" style="top:532px;color:#858585">25</div><div class="cl" style="top:532px"><span class="k">export</span> <span class="k">default</span> <span class="c">Home</span>;</div><div class="ln" style="top:550px;color:#c6c6c6">26</div></div><div class="gd" style="left:461.0px;top:225px;height:72px;background:#404040"></div><div class="gd" style="left:475.4px;top:261px;height:18px;background:#404040"></div><div class="gd" style="left:461.0px;top:351px;height:144px;background:#404040"></div><div class="gd" style="left:475.4px;top:369px;height:108px;background:#404040"></div><div class="gd" style="left:489.8px;top:387px;height:72px;background:#404040"></div><div class="gd" style="left:504.2px;top:405px;height:18px;background:#404040"></div><div class="p" style="left:461px;top:549px;width:630px;height:18px;border:2px solid #282828"></div><div class="p" style="left:1091px;top:81px;width:96px;height:680px;background:#1d1d1d;"></div><div class="p" style="left:1085px;top:81px;width:6px;height:680px;background:linear-gradient(90deg,#1e1e1e00,#00000018)"></div><div class="p" style="left:1187px;top:81px;width:1px;height:680px;background:#3a3a3a;"></div><div class="p" style="left:1188px;top:81px;width:10px;height:680px;background:#1e1e1e;"></div><div class="p" style="left:1188px;top:357px;width:10px;height:2px;background:#a0a0a0;"></div><svg class="ic" style="left:1091px;top:81px" width="96" height="60" viewBox="0 0 96 60"><rect x="8" y="50.200" width="88" height="2" fill="#20405f"/><rect x="8" y="0.20" width="6" height="1.100" fill="#a06c9d" opacity="0.700"/><rect x="15" y="0.20" width="14" height="1.100" fill="#7aa9c2" opacity="0.700"/><rect x="30" y="0.20" width="4" height="1.100" fill="#a06c9d" opacity="0.700"/><rect x="35" y="0.20" width="29" height="1.100" fill="#a5745d" opacity="0.700"/><rect x="64" y="0.20" width="1" height="1.100" fill="#9a9a9a" opacity="0.700"/><rect x="8" y="2.21" width="6" height="1.100" fill="#a06c9d" opacity="0.700"/><rect x="15" y="2.21" width="4" height="1.100" fill="#7aa9c2" opacity="0.700"/><rect x="20" y="2.21" width="4" height="1.100" fill="#a06c9d" opacity="0.700"/><rect x="25" y="2.21" width="13" height="1.100" fill="#a5745d" opacity="0.700"/><rect x="38" y="2.21" width="1" height="1.100" fill="#9a9a9a" opacity="0.700"/><rect x="8" y="4.21" width="6" height="1.100" fill="#a06c9d" opacity="0.700"/><rect x="15" y="4.21" width="6" height="1.100" fill="#7aa9c2" opacity="0.700"/><rect x="22" y="4.21" width="4" height="1.100" fill="#a06c9d" opacity="0.700"/><rect x="27" y="4.21" width="20" height="1.100" fill="#a5745d" opacity="0.700"/><rect x="47" y="4.21" width="1" height="1.100" fill="#9a9a9a" opacity="0.700"/><rect x="8" y="6.21" width="6" height="1.100" fill="#a06c9d" opacity="0.700"/><rect x="15" y="6.21" width="6" height="1.100" fill="#7aa9c2" opacity="0.700"/><rect x="22" y="6.21" width="4" height="1.100" fill="#a06c9d" opacity="0.700"/><rect x="27" y="6.21" width="20" height="1.100" fill="#a5745d" opacity="0.700"/><rect x="47" y="6.21" width="1" height="1.100" fill="#9a9a9a" opacity="0.700"/><rect x="8" y="8.22" width="6" height="1.100" fill="#a06c9d" opacity="0.700"/><rect x="15" y="8.22" width="4" height="1.100" fill="#a06c9d" opacity="0.700"/><rect x="20" y="8.22" width="1" height="1.100" fill="#9a9a9a" opacity="0.700"/><rect x="22" y="8.22" width="4" height="1.100" fill="#7aa9c2" opacity="0.700"/><rect x="27" y="8.22" width="2" height="1.100" fill="#a06c9d" opacity="0.700"/><rect x="30" y="8.22" width="8" height="1.100" fill="#7aa9c2" opacity="0.700"/><rect x="39" y="8.22" width="1" height="1.100" fill="#9a9a9a" opacity="0.700"/><rect x="41" y="8.22" width="4" height="1.100" fill="#a06c9d" opacity="0.700"/><rect x="46" y="8.22" width="20" height="1.100" fill="#a5745d" opacity="0.700"/><rect x="66" y="8.22" width="1" height="1.100" fill="#9a9a9a" opacity="0.700"/><rect x="8" y="12.23" width="6" height="1.100" fill="#a06c9d" opacity="0.700"/><rect x="15" y="12.23" width="5" height="1.100" fill="#4577a3" opacity="0.700"/><rect x="21" y="12.23" width="8" height="1.100" fill="#4577a3" opacity="0.700"/><rect x="30" y="12.23" width="14" height="1.100" fill="#adad86" opacity="0.700"/><rect x="44" y="12.23" width="3" height="1.100" fill="#9a9a9a" opacity="0.700"/><rect x="48" y="12.23" width="7" height="1.100" fill="#3f9d8b" opacity="0.700"/><rect x="55" y="12.23" width="2" height="1.100" fill="#9a9a9a" opacity="0.700"/><rect x="58" y="12.23" width="5" height="1.100" fill="#7aa9c2" opacity="0.700"/><rect x="63" y="12.23" width="1" height="1.100" fill="#9a9a9a" opacity="0.700"/><rect x="65" y="12.23" width="8" height="1.100" fill="#3f9d8b" opacity="0.700"/><rect x="74" y="12.23" width="2" height="1.100" fill="#9a9a9a" opacity="0.700"/><rect x="77" y="12.23" width="1" height="1.100" fill="#9a9a9a" opacity="0.700"/><rect x="10" y="14.23" width="5" height="1.100" fill="#4577a3" opacity="0.700"/><rect x="16" y="14.23" width="4" height="1.100" fill="#4094c6" opacity="0.700"/><rect x="21" y="14.23" width="1" height="1.100" fill="#9a9a9a" opacity="0.700"/><rect x="23" y="14.23" width="5" height="1.100" fill="#a06c9d" opacity="0.700"/><rect x="29" y="14.23" width="4" height="1.100" fill="#7aa9c2" opacity="0.700"/><rect x="33" y="14.23" width="1" height="1.100" fill="#9a9a9a" opacity="0.700"/><rect x="34" y="14.23" width="3" height="1.100" fill="#adad86" opacity="0.700"/><rect x="37" y="14.23" width="1" height="1.100" fill="#9a9a9a" opacity="0.700"/><rect x="38" y="14.23" width="6" height="1.100" fill="#a5745d" opacity="0.700"/><rect x="44" y="14.23" width="2" height="1.100" fill="#9a9a9a" opacity="0.700"/><rect x="10" y="16.24" width="6" height="1.100" fill="#a06c9d" opacity="0.700"/><rect x="17" y="16.24" width="1" height="1.100" fill="#9a9a9a" opacity="0.700"/><rect x="12" y="18.24" width="5" height="1.100" fill="#7aa9c2" opacity="0.700"/><rect x="17" y="18.24" width="1" height="1.100" fill="#9a9a9a" opacity="0.700"/><rect x="19" y="18.24" width="4" height="1.100" fill="#4094c6" opacity="0.700"/><rect x="23" y="18.24" width="1" height="1.100" fill="#9a9a9a" opacity="0.700"/><rect x="10" y="20.25" width="2" height="1.100" fill="#9a9a9a" opacity="0.700"/><rect x="8" y="22.25" width="1" height="1.100" fill="#9a9a9a" opacity="0.700"/><rect x="8" y="26.26" width="5" height="1.100" fill="#4577a3" opacity="0.700"/><rect x="14" y="26.26" width="4" height="1.100" fill="#4094c6" opacity="0.700"/><rect x="18" y="26.26" width="1" height="1.100" fill="#9a9a9a" opacity="0.700"/><rect x="20" y="26.26" width="5" height="1.100" fill="#3f9d8b" opacity="0.700"/><rect x="25" y="26.26" width="1" height="1.100" fill="#9a9a9a" opacity="0.700"/><rect x="26" y="26.26" width="2" height="1.100" fill="#3f9d8b" opacity="0.700"/><rect x="28" y="26.26" width="1" height="1.100" fill="#9a9a9a" opacity="0.700"/><rect x="29" y="26.26" width="8" height="1.100" fill="#3f9d8b" opacity="0.700"/><rect x="37" y="26.26" width="1" height="1.100" fill="#9a9a9a" opacity="0.700"/><rect x="39" y="26.26" width="1" height="1.100" fill="#9a9a9a" opacity="0.700"/><rect x="41" y="26.26" width="2" height="1.100" fill="#9a9a9a" opacity="0.700"/><rect x="44" y="26.26" width="8" height="1.100" fill="#7aa9c2" opacity="0.700"/><rect x="52" y="26.26" width="1" height="1.100" fill="#9a9a9a" opacity="0.700"/><rect x="54" y="26.26" width="8" height="1.100" fill="#7aa9c2" opacity="0.700"/><rect x="63" y="26.26" width="2" height="1.100" fill="#9a9a9a" opacity="0.700"/><rect x="66" y="26.26" width="2" height="1.100" fill="#4577a3" opacity="0.700"/><rect x="69" y="26.26" width="1" height="1.100" fill="#9a9a9a" opacity="0.700"/><rect x="10" y="28.27" width="6" height="1.100" fill="#a06c9d" opacity="0.700"/><rect x="17" y="28.27" width="1" height="1.100" fill="#9a9a9a" opacity="0.700"/><rect x="12" y="30.27" width="1" height="1.100" fill="#666666" opacity="0.700"/><rect x="13" y="30.27" width="6" height="1.100" fill="#3f9d8b" opacity="0.700"/><rect x="20" y="30.27" width="8" height="1.100" fill="#7aa9c2" opacity="0.700"/><rect x="28" y="30.27" width="1" height="1.100" fill="#9a9a9a" opacity="0.700"/><rect x="29" y="30.27" width="1" height="1.100" fill="#4577a3" opacity="0.700"/><rect x="30" y="30.27" width="8" height="1.100" fill="#7aa9c2" opacity="0.700"/><rect x="38" y="30.27" width="1" height="1.100" fill="#4577a3" opacity="0.700"/><rect x="39" y="30.27" width="1" height="1.100" fill="#666666" opacity="0.700"/><rect x="14" y="32.28" width="1" height="1.100" fill="#4577a3" opacity="0.700"/><rect x="15" y="32.28" width="8" height="1.100" fill="#7aa9c2" opacity="0.700"/><rect x="23" y="32.28" width="1" height="1.100" fill="#9a9a9a" opacity="0.700"/><rect x="24" y="32.28" width="3" height="1.100" fill="#adad86" opacity="0.700"/><rect x="27" y="32.28" width="2" height="1.100" fill="#9a9a9a" opacity="0.700"/><rect x="29" y="32.28" width="7" height="1.100" fill="#7aa9c2" opacity="0.700"/><rect x="36" y="32.28" width="1" height="1.100" fill="#9a9a9a" opacity="0.700"/><rect x="38" y="32.28" width="2" height="1.100" fill="#4577a3" opacity="0.700"/><rect x="41" y="32.28" width="1" height="1.100" fill="#9a9a9a" opacity="0.700"/><rect x="16" y="34.29" width="1" height="1.100" fill="#666666" opacity="0.700"/><rect x="17" y="34.29" width="14" height="1.100" fill="#3f9d8b" opacity="0.700"/><rect x="32" y="34.29" width="3" height="1.100" fill="#7aa9c2" opacity="0.700"/><rect x="35" y="34.29" width="1" height="1.100" fill="#9a9a9a" opacity="0.700"/><rect x="36" y="34.29" width="1" height="1.100" fill="#4577a3" opacity="0.700"/><rect x="37" y="34.29" width="7" height="1.100" fill="#7aa9c2" opacity="0.700"/><rect x="44" y="34.29" width="1" height="1.100" fill="#9a9a9a" opacity="0.700"/><rect x="45" y="34.29" width="2" height="1.100" fill="#7aa9c2" opacity="0.700"/><rect x="47" y="34.29" width="1" height="1.100" fill="#4577a3" opacity="0.700"/><rect x="49" y="34.29" width="1" height="1.100" fill="#4577a3" opacity="0.700"/><rect x="50" y="34.29" width="3" height="1.100" fill="#9a9a9a" opacity="0.700"/><rect x="53" y="34.29" width="7" height="1.100" fill="#7aa9c2" opacity="0.700"/><rect x="60" y="34.29" width="1" height="1.100" fill="#4577a3" opacity="0.700"/><rect x="62" y="34.29" width="2" height="1.100" fill="#666666" opacity="0.700"/><rect x="14" y="36.29" width="2" height="1.100" fill="#9a9a9a" opacity="0.700"/><rect x="16" y="36.29" width="1" height="1.100" fill="#4577a3" opacity="0.700"/><rect x="14" y="38.30" width="1" height="1.100" fill="#666666" opacity="0.700"/><rect x="15" y="38.30" width="6" height="1.100" fill="#3f9d8b" opacity="0.700"/><rect x="22" y="38.30" width="2" height="1.100" fill="#666666" opacity="0.700"/><rect x="12" y="40.30" width="2" height="1.100" fill="#666666" opacity="0.700"/><rect x="14" y="40.30" width="6" height="1.100" fill="#3f9d8b" opacity="0.700"/><rect x="20" y="40.30" width="1" height="1.100" fill="#666666" opacity="0.700"/><rect x="10" y="42.30" width="2" height="1.100" fill="#9a9a9a" opacity="0.700"/><rect x="8" y="44.31" width="2" height="1.100" fill="#9a9a9a" opacity="0.700"/><rect x="8" y="48.32" width="6" height="1.100" fill="#a06c9d" opacity="0.700"/><rect x="15" y="48.32" width="7" height="1.100" fill="#a06c9d" opacity="0.700"/><rect x="23" y="48.32" width="4" height="1.100" fill="#4094c6" opacity="0.700"/><rect x="27" y="48.32" width="1" height="1.100" fill="#9a9a9a" opacity="0.700"/></svg><div class="tx" style="left:536.6px;top:-1.0px;font:normal normal 13.5px 'Liberation Sans';line-height:22px;color:#cfcfcf;letter-spacing:-0.342px;">index.tsx</div><div class="tx" style="left:604.2px;top:-1.0px;font:normal normal 13.5px 'Liberation Sans';line-height:22px;color:#cfcfcf;letter-spacing:0.002px;">profy-dev</div><div class="tx" style="left:25.6px;top:689.3px;font:normal bold 9px 'Liberation Sans';line-height:22px;color:#ffffff;">2</div><div class="tx" style="left:64.5px;top:31.0px;font:normal normal 11px 'Liberation Sans';line-height:22px;color:#bbbbbb;letter-spacing:-0.428px;">EXPLORER</div><div class="tx" style="left:64.3px;top:59.0px;font:normal bold 11px 'Liberation Sans';line-height:22px;color:#cccccc;letter-spacing:0.047px;">OPEN EDITORS</div><div class="tx" style="left:87.3px;top:81.2px;font:normal bold 11px 'Liberation Sans';line-height:22px;color:#2b8fd6;letter-spacing:-0.431px;-webkit-text-stroke:0;">TS</div><div class="tx" style="left:108.2px;top:82.0px;font:normal normal 13.5px 'Liberation Sans';line-height:22px;color:#cccccc;letter-spacing:0.356px;">[...bot].ts</div><div class="tx" style="left:169.6px;top:82.0px;font:normal normal 12.1px 'Liberation Sans';line-height:22px;color:#989898;letter-spacing:0.306px;">pages/api/bot</div><div class="tx" style="left:108.2px;top:104.0px;font:normal normal 13.5px 'Liberation Sans';line-height:22px;color:#cccccc;letter-spacing:-0.010px;">header.tsx</div><div class="tx" style="left:176.4px;top:104.0px;font:normal normal 12.1px 'Liberation Sans';line-height:22px;color:#989898;letter-spacing:0.235px;">components/header</div><div class="tx" style="left:108.2px;top:126.0px;font:normal normal 13.5px 'Liberation Sans';line-height:22px;color:#cccccc;letter-spacing:0.224px;">unsubscribe-from-business-updates.tsx</div><div class="tx" style="left:358.1px;top:126.0px;font:normal normal 12.1px 'Liberation Sans';line-height:22px;color:#989898;letter-spacing:0.149px;">pages</div><div class="tx" style="left:107.6px;top:148.0px;font:normal normal 13.5px 'Liberation Sans';line-height:22px;color:#cccccc;letter-spacing:0.151px;">testimonial.tsx</div><div class="tx" style="left:201.4px;top:148.0px;font:normal normal 12.1px 'Liberation Sans';line-height:22px;color:#989898;letter-spacing:0.234px;">components/testimonial</div><div class="tx" style="left:107.6px;top:170.0px;font:italic normal 13.5px 'Liberation Sans';line-height:22px;color:#e0e0e0;letter-spacing:0.047px;">index.tsx</div><div class="tx" style="left:167.3px;top:170.0px;font:italic normal 12.1px 'Liberation Sans';line-height:22px;color:#989898;letter-spacing:0.169px;">pages</div><div class="tx" style="left:108.2px;top:192.0px;font:normal normal 13.5px 'Liberation Sans';line-height:22px;color:#cccccc;letter-spacing:0.104px;">components.tsx</div><div class="tx" style="left:210.2px;top:192.0px;font:normal normal 12.1px 'Liberation Sans';line-height:22px;color:#989898;letter-spacing:0.307px;">components/mdx-components</div><div class="tx" style="left:108.2px;top:214.0px;font:normal normal 13.5px 'Liberation Sans';line-height:22px;color:#cccccc;letter-spacing:0.108px;">zoom-image.tsx</div><div class="tx" style="left:211.1px;top:214.0px;font:normal normal 12.1px 'Liberation Sans';line-height:22px;color:#989898;letter-spacing:0.291px;">components/mdx-components</div><div class="tx" style="left:64.3px;top:236.0px;font:normal bold 11px 'Liberation Sans';line-height:22px;color:#cccccc;letter-spacing:0.269px;">PROFY-DEV</div><div class="tx" style="left:108.2px;top:261.0px;font:normal normal 13.5px 'Liberation Sans';line-height:22px;color:#cccccc;letter-spacing:0.267px;">project</div><div class="tx" style="left:107.6px;top:283.0px;font:normal normal 13.5px 'Liberation Sans';line-height:22px;color:#cccccc;letter-spacing:0.119px;">_app.tsx</div><div class="tx" style="left:107.6px;top:305.0px;font:normal normal 13.5px 'Liberation Sans';line-height:22px;color:#cccccc;letter-spacing:0.154px;">_document.tsx</div><div class="tx" style="left:108.2px;top:327.0px;font:normal normal 13.5px 'Liberation Sans';line-height:22px;color:#cccccc;letter-spacing:0.302px;">[slug].tsx</div><div class="tx" style="left:108.2px;top:349.0px;font:normal normal 13.5px 'Liberation Sans';line-height:22px;color:#cccccc;letter-spacing:0.184px;">blog.tsx</div><div class="tx" style="left:107.6px;top:371.0px;font:normal normal 13.5px 'Liberation Sans';line-height:22px;color:#cccccc;letter-spacing:0.213px;">checkout.tsx</div><div class="tx" style="left:108.2px;top:393.0px;font:normal normal 13.5px 'Liberation Sans';line-height:22px;color:#ffffff;letter-spacing:0.013px;">index.tsx</div><div class="tx" style="left:108.2px;top:415.0px;font:normal normal 13.5px 'Liberation Sans';line-height:22px;color:#cccccc;letter-spacing:0.224px;">unsubscribe-from-business-updates.tsx</div><div class="tx" style="left:100.0px;top:437.0px;font:normal normal 13.5px 'Liberation Sans';line-height:22px;color:#cccccc;letter-spacing:0.186px;">public</div><div class="tx" style="left:100.0px;top:459.0px;font:normal normal 13.5px 'Liberation Sans';line-height:22px;color:#cccccc;letter-spacing:0.269px;">scripts</div><div class="tx" style="left:100.0px;top:481.0px;font:normal normal 13.5px 'Liberation Sans';line-height:22px;color:#cccccc;letter-spacing:0.229px;">test-helpers</div><div class="tx" style="left:78.8px;top:502.2px;font:italic bold 6.5px 'Liberation Serif';line-height:22px;color:#cdb544;letter-spacing:-0.386px;-webkit-text-stroke:0;">Babel</div><div class="tx" style="left:100.0px;top:503.0px;font:normal normal 13.5px 'Liberation Sans';line-height:22px;color:#cccccc;letter-spacing:0.134px;">.babelrc</div><div class="tx" style="left:100.0px;top:525.0px;font:normal normal 13.5px 'Liberation Sans';line-height:22px;color:#8c8c8c;letter-spacing:-0.133px;">.env</div><div class="tx" style="left:100.0px;top:547.0px;font:normal normal 13.5px 'Liberation Sans';line-height:22px;color:#cccccc;letter-spacing:0.119px;">.env.test</div><div class="tx" style="left:100.0px;top:569.0px;font:normal normal 13.5px 'Liberation Sans';line-height:22px;color:#cccccc;letter-spacing:0.107px;">.eslintrc.js</div><div class="tx" style="left:100.0px;top:591.0px;font:normal normal 13.5px 'Liberation Sans';line-height:22px;color:#cccccc;letter-spacing:0.185px;">.gitignore</div><div class="tx" style="left:100.0px;top:613.0px;font:normal normal 13.5px 'Liberation Sans';line-height:22px;color:#cccccc;letter-spacing:0.200px;">.prettierignore</div><div class="tx" style="left:100.0px;top:635.0px;font:normal normal 13.5px 'Liberation Sans';line-height:22px;color:#cccccc;letter-spacing:0.289px;">.prettierrc</div><div class="tx" style="left:78.9px;top:656.3px;font:normal bold 6px 'Liberation Sans';line-height:22px;color:#d8c356;letter-spacing:0.576px;">YML</div><div class="tx" style="left:100.0px;top:657.0px;font:normal normal 13.5px 'Liberation Sans';line-height:22px;color:#cccccc;letter-spacing:0.014px;">codegen.yml</div><div class="tx" style="left:101.2px;top:679.0px;font:normal normal 13.5px 'Liberation Sans';line-height:22px;color:#cccccc;letter-spacing:0.087px;">jest.config.json</div><div class="tx" style="left:79.4px;top:700.2px;font:normal bold 11px 'Liberation Sans';line-height:22px;color:#1da245;letter-spacing:-0.431px;-webkit-text-stroke:0;">TS</div><div class="tx" style="left:100.0px;top:701.0px;font:normal normal 13.5px 'Liberation Sans';line-height:22px;color:#cccccc;letter-spacing:0.162px;">next-env.d.ts</div><div class="tx" style="left:64.3px;top:721.0px;font:normal bold 11px 'Liberation Sans';line-height:22px;color:#cccccc;letter-spacing:0.174px;">OUTLINE</div><div class="tx" style="left:64.3px;top:743.0px;font:normal bold 11px 'Liberation Sans';line-height:22px;color:#cccccc;letter-spacing:0.207px;">TIMELINE</div><div class="tx" style="left:392.0px;top:30.0px;font:normal normal 13.5px 'Liberation Sans';line-height:22px;color:#979797;letter-spacing:0.256px;clip-path:inset(0 0 0 3.2px);">m-business-updates.tsx</div><div class="tx" style="left:600.6px;top:30.0px;font:normal normal 13.5px 'Liberation Sans';line-height:22px;color:#979797;letter-spacing:0.165px;">testimonial.tsx</div><div class="tx" style="left:748.8px;top:30.0px;font:italic normal 13.5px 'Liberation Sans';line-height:22px;color:#ffffff;letter-spacing:0.135px;">index.tsx</div><div class="tx" style="left:869.6px;top:30.0px;font:normal normal 13.5px 'Liberation Sans';line-height:22px;color:#979797;letter-spacing:0.147px;">components.tsx</div><div class="tx" style="left:411.0px;top:59.5px;font:normal normal 13.5px 'Liberation Sans';line-height:22px;color:#a9a9a9;letter-spacing:-0.059px;">pages</div><div class="tx" style="left:486.0px;top:59.5px;font:normal normal 13.5px 'Liberation Sans';line-height:22px;color:#a9a9a9;letter-spacing:0.080px;">index.tsx</div><div class="tx" style="left:556.3px;top:59.5px;font:normal normal 13.5px 'Liberation Sans';line-height:22px;color:#a9a9a9;letter-spacing:-0.889px;">...</div><div class="tx" style="left:461.0px;top:79.0px;font:normal normal 10.8px 'Liberation Sans';line-height:22px;color:#999999;letter-spacing:0.009px;-webkit-text-stroke:0.1px;">Johannes, 7 months ago | 2 authors (You and others)</div>
</body>
</html>
